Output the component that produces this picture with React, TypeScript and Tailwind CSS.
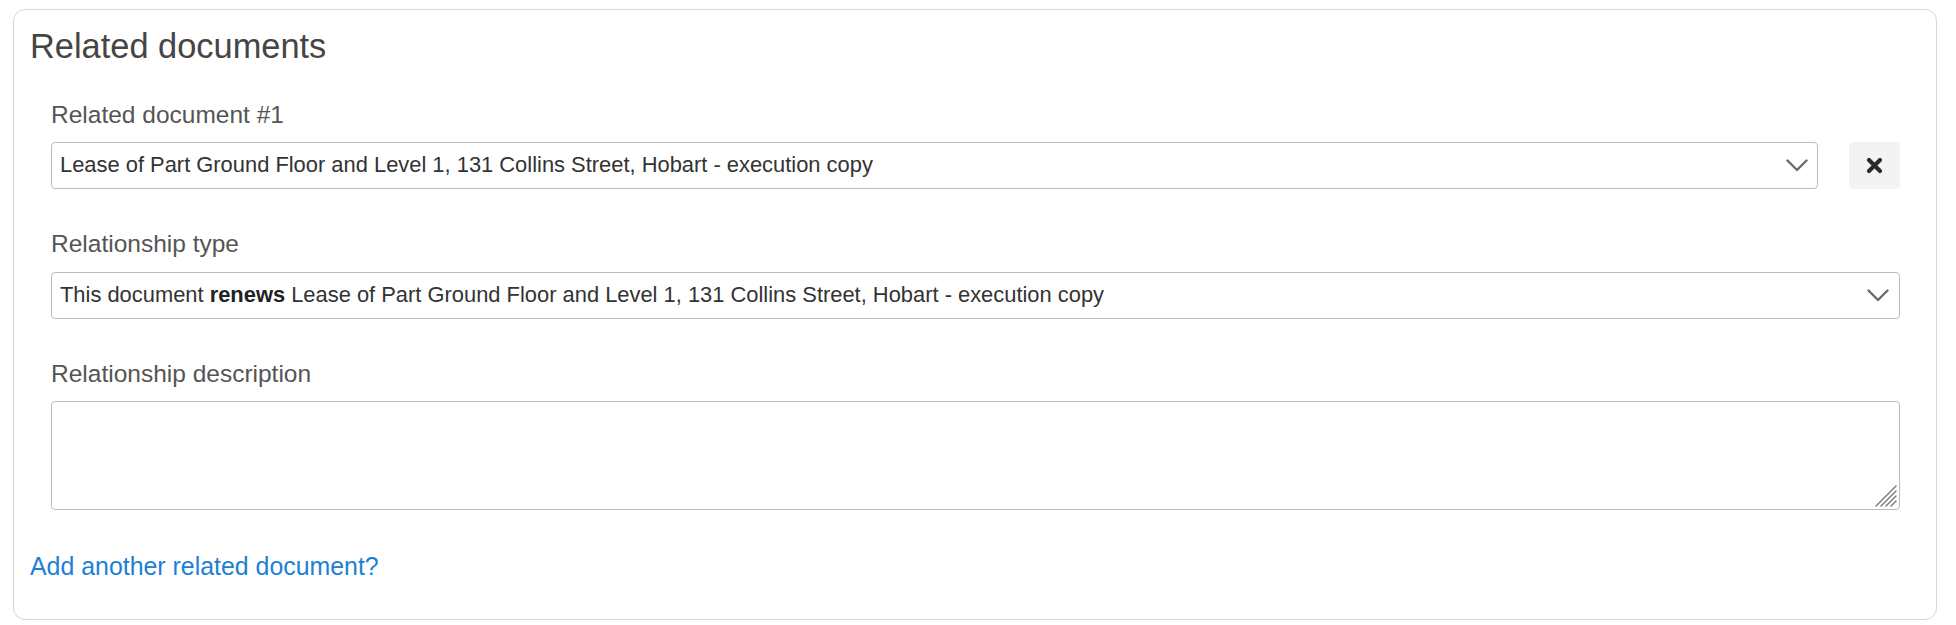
import React from "react";

function Chevron() {
  return (
    <svg width="22" height="13" viewBox="0 0 22 13" className="shrink-0">
      <polyline points="1.5,1.5 11,11 20.5,1.5" fill="none" stroke="#6b6b6b" strokeWidth="2.4" strokeLinecap="round" strokeLinejoin="round" />
    </svg>
  );
}

function XIcon() {
  return (
    <svg width="17" height="17" viewBox="0 0 17 17">
      <path d="M3 3 L14 14 M14 3 L3 14" stroke="#2b2b2b" strokeWidth="4.2" strokeLinecap="round" fill="none" />
    </svg>
  );
}

function Grip() {
  return (
    <svg width="24" height="24" viewBox="0 0 24 24" className="absolute right-[2px] bottom-[2px] pointer-events-none">
      <g stroke="#7a7a7a" strokeWidth="1.4" strokeLinecap="round">
        <line x1="2" y1="22" x2="22" y2="2" />
        <line x1="7" y1="22" x2="22" y2="7" />
        <line x1="12" y1="22" x2="22" y2="12" />
        <line x1="17" y1="22" x2="22" y2="17" />
      </g>
    </svg>
  );
}

export default function App() {
  return (
    <div className="w-full min-h-[625px] bg-white pt-[9px]" style={{ fontFamily: '"Liberation Sans", Arial, sans-serif' }}>
      <div className="ml-[13px] w-[1924px] h-[611px] border border-[#d6d6d6] rounded-[12px] pt-[17px] pb-[38px] px-[16px] flex flex-col">
        <h3 className="text-[34.4px] leading-[38px] text-[#454545] font-normal">Related documents</h3>

        <div className="ml-[21px] mr-[20px] mt-[36px]">
          <div className="text-[24.5px] leading-[28px] text-[#555] mb-[13px]">Related document #1</div>
          <div className="flex items-center">
            <div className="flex-1 h-[47px] border border-[#bdbdbd] rounded-[4px] flex items-center justify-between pl-[8px] pr-[9px] text-[21.9px] text-[#333]">
              <span>Lease of Part Ground Floor and Level 1, 131 Collins Street, Hobart - execution copy</span>
              <Chevron />
            </div>
            <button className="ml-[31px] w-[51px] h-[47px] rounded-[4px] bg-[#f3f3f3] flex items-center justify-center">
              <XIcon />
            </button>
          </div>

          <div className="mt-[41px] text-[24.5px] leading-[28px] text-[#555] mb-[14px]">Relationship type</div>
          <div className="h-[47px] border border-[#bdbdbd] rounded-[4px] flex items-center justify-between pl-[8px] pr-[10px] text-[21.9px] text-[#333]">
            <span>
              This document <b className="font-bold text-[#222]">renews</b> Lease of Part Ground Floor and Level 1, 131 Collins Street, Hobart - execution copy
            </span>
            <Chevron />
          </div>

          <div className="mt-[41px] text-[24.5px] leading-[28px] text-[#555] mb-[13px]">Relationship description</div>
          <div className="relative">
            <textarea className="block w-full h-[109px] border border-[#bdbdbd] rounded-[4px] resize-none outline-none" />
            <Grip />
          </div>
        </div>

        <a href="#" className="mt-[42px] text-[24.9px] leading-[28px] text-[#1d80d4] self-start">Add another related document?</a>
      </div>
    </div>
  );
}
